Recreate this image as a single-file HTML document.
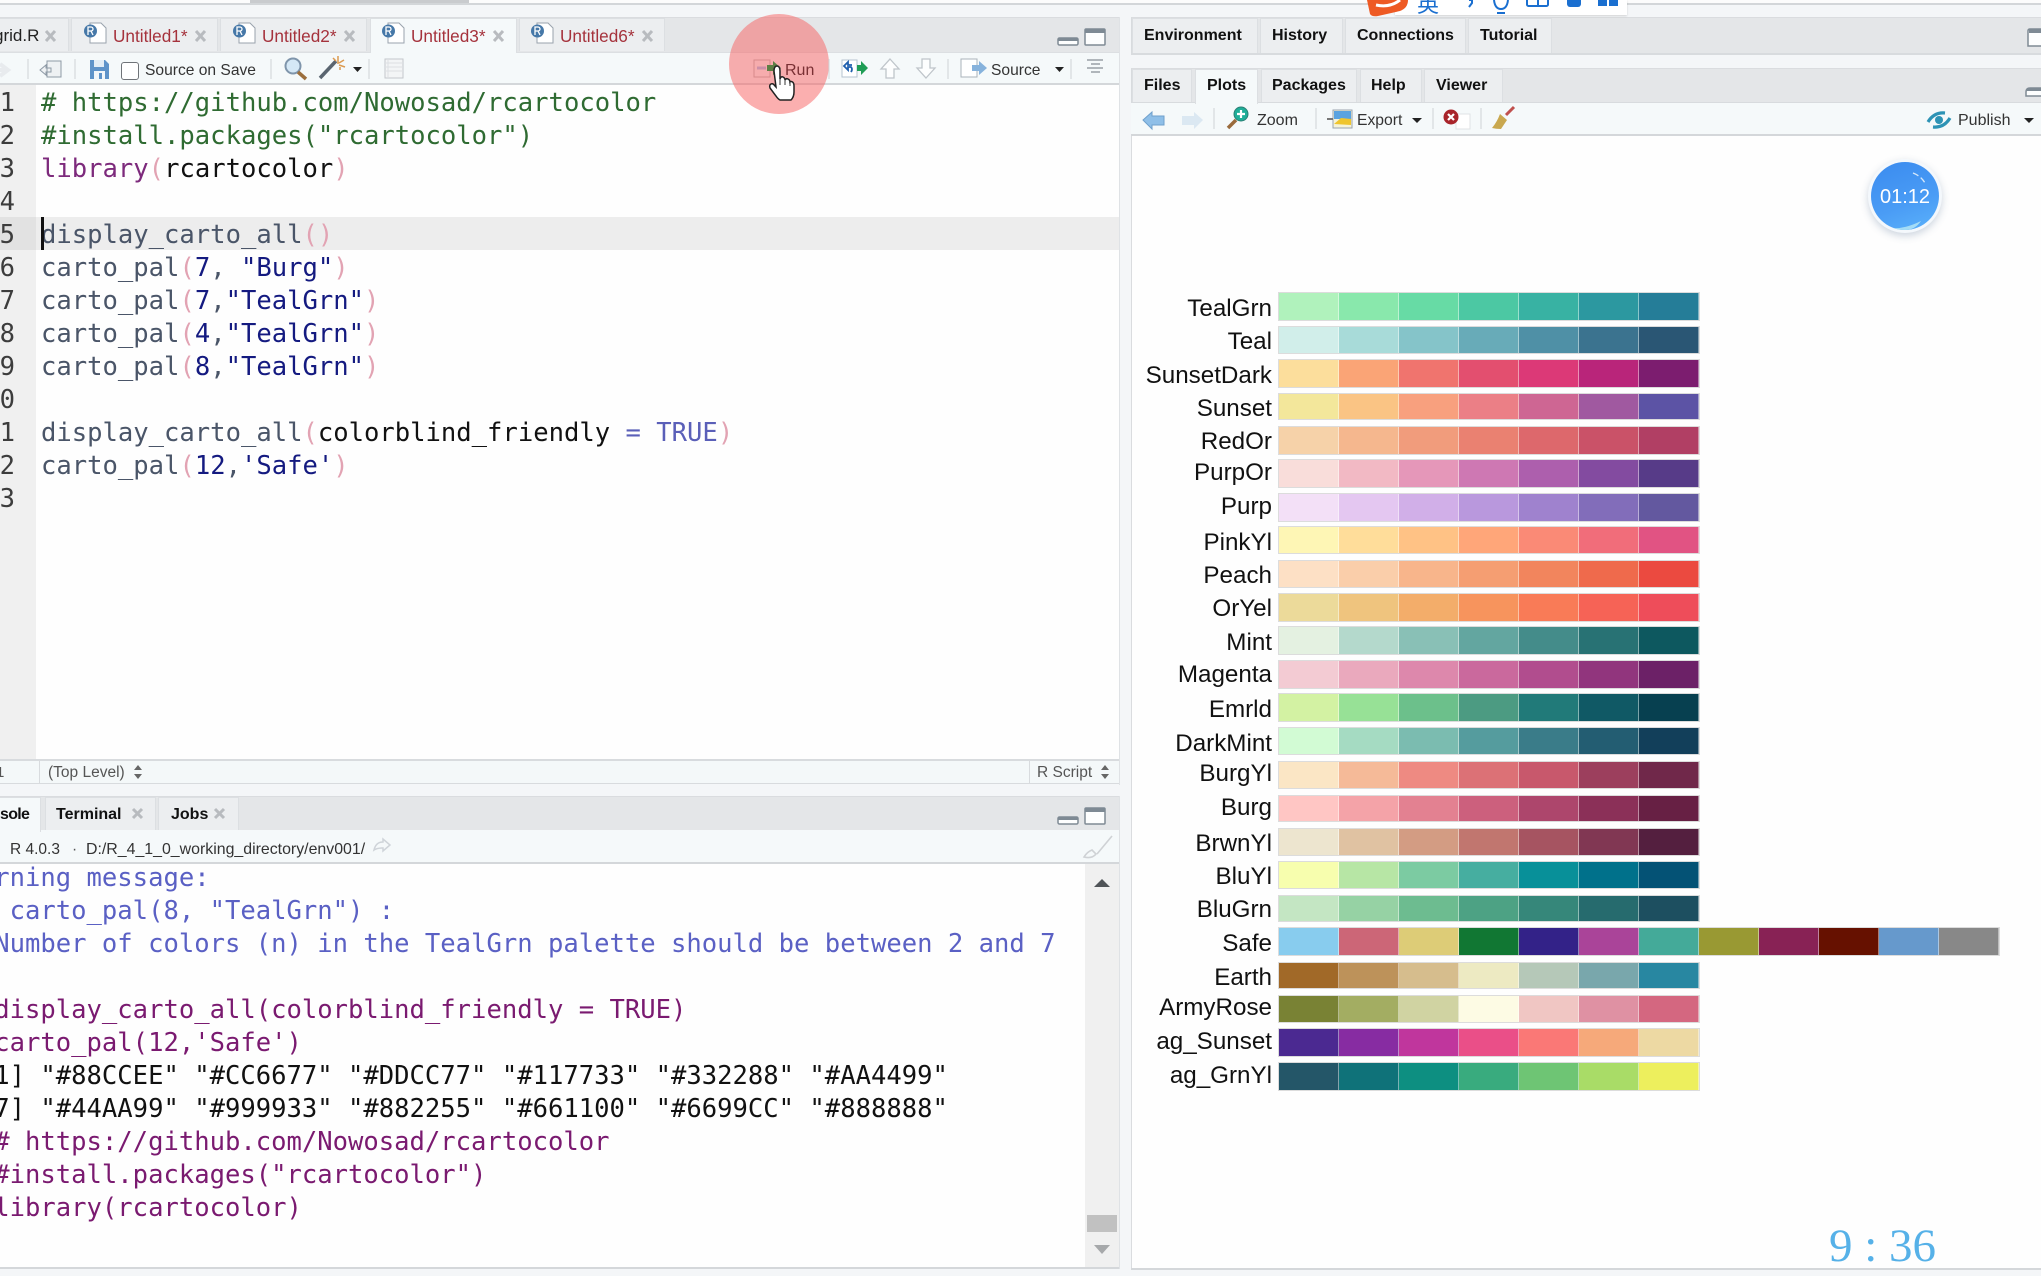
<!DOCTYPE html>
<html><head><meta charset="utf-8"><style>
*{box-sizing:border-box;margin:0;padding:0}
html,body{width:2041px;height:1276px;overflow:hidden;background:#f4f6f8;font-family:"Liberation Sans",sans-serif}
.a{position:absolute}
.t{position:absolute;white-space:pre;font-family:"Liberation Sans",sans-serif;color:#222}
.tab{position:absolute;background:#eceef0;border:1px solid #dcdfe2;border-bottom:none}
.b{font-weight:bold;font-size:16px;color:#111;line-height:20px}
.m{position:absolute;font-family:"DejaVu Sans Mono",monospace;font-size:25.55px;line-height:33px;white-space:pre;left:0}
.n{position:absolute;font-family:"DejaVu Sans Mono",monospace;font-size:25.55px;line-height:33px;color:#3d3d3d;white-space:pre;text-align:right;width:15px;left:0;direction:rtl}
.g{color:#2f6b32}.s{color:#4a5568}.p{color:#e2a3b3}.u{color:#141a80}.k{color:#7d2a7c}.v{color:#111}.o{color:#5a5fb8}
.l{position:absolute;right:769px;font-size:24.2px;line-height:24px;color:#111;white-space:pre;margin-top:1px}
.r{position:absolute;left:1279px;display:flex;height:27px;outline:1px solid #dcdcdc}
.r i{display:block;width:60px;height:100%;border-right:1px solid rgba(255,255,255,.45)}
.cm{color:#5a60c4}.ci{color:#7a1a70}.co{color:#111}
</style></head><body>

<!-- top strip -->
<div class="a" style="left:0;top:0;width:2041px;height:4px;background:#fcfcfc"></div>
<div class="a" style="left:0;top:3px;width:2041px;height:2px;background:#d3d6d9"></div>
<div class="a" style="left:250px;top:0;width:219px;height:3px;background:#c9cbce"></div>

<!-- editor pane -->
<div class="a" style="left:0;top:17px;width:1119px;height:35px;background:#e4e6e8;border-top:1px solid #dadcdf"></div>
<div class="a" style="left:0;top:52px;width:1119px;height:31px;background:#f5f9fa;border-top:1px solid #dcdfe2"></div>
<div class="a" style="left:0;top:83px;width:1119px;height:2px;background:#d4d7da"></div>
<div class="a" style="left:0;top:85px;width:1119px;height:674px;background:#fefefe"></div>
<div class="a" style="left:0;top:85px;width:36px;height:674px;background:#f0f0f0"></div>
<div class="a" style="left:0;top:217px;width:1119px;height:33px;background:#ededed"></div>
<div class="a" style="left:0;top:217px;width:36px;height:33px;background:#e2e2e2"></div>
<div class="a" style="left:1119px;top:17px;width:1px;height:768px;background:#dfe2e5"></div>

<div class="tab" style="left:-10px;top:18px;width:79px;height:33px"></div>
<div class="tab" style="left:71px;top:18px;width:147px;height:33px"></div>
<div class="tab" style="left:220px;top:18px;width:147px;height:33px"></div>
<div class="tab" style="left:370px;top:18px;width:147px;height:35px;background:#f5f9fa"></div>
<div class="tab" style="left:519px;top:18px;width:146px;height:33px"></div>

<div class="t" style="left:-6px;top:25px;font-size:17px;line-height:22px;color:#222">grid.R</div>
<div class="t" style="left:113px;top:25px;font-size:17.2px;line-height:22px;color:#a5323c">Untitled1*</div>
<div class="t" style="left:262px;top:25px;font-size:17.2px;line-height:22px;color:#a5323c">Untitled2*</div>
<div class="t" style="left:411px;top:25px;font-size:17.2px;line-height:22px;color:#a5323c">Untitled3*</div>
<div class="t" style="left:560px;top:25px;font-size:17.2px;line-height:22px;color:#a5323c">Untitled6*</div>
<div class="t" style="left:145px;top:61px;font-size:15.6px;line-height:20px;color:#333">Source on Save</div>
<div class="a" style="left:121px;top:62px;width:18px;height:18px;border:1.5px solid #6f7378;border-radius:3px;background:#fff"></div>
<div class="t" style="left:991px;top:61px;font-size:15.6px;line-height:20px;color:#333">Source</div>

<!-- line numbers -->
<div class="n" style="top:87px">1</div>
<div class="n" style="top:120px">2</div>
<div class="n" style="top:153px">3</div>
<div class="n" style="top:186px">4</div>
<div class="n" style="top:219px">5</div>
<div class="n" style="top:252px">6</div>
<div class="n" style="top:285px">7</div>
<div class="n" style="top:318px">8</div>
<div class="n" style="top:351px">9</div>
<div class="n" style="top:384px">0</div>
<div class="n" style="top:417px">1</div>
<div class="n" style="top:450px">2</div>
<div class="n" style="top:483px">3</div>

<!-- code -->
<div class="m" style="left:41px;top:87px"><span class="g"># https://github.com/Nowosad/rcartocolor</span></div>
<div class="m" style="left:41px;top:120px"><span class="g">#install.packages("rcartocolor")</span></div>
<div class="m" style="left:41px;top:153px"><span class="k">library</span><span class="p">(</span><span class="v">rcartocolor</span><span class="p">)</span></div>
<div class="m" style="left:41px;top:219px"><span class="s">display_carto_all</span><span class="p">()</span></div>
<div class="a" style="left:41px;top:217px;width:3px;height:33px;background:#111"></div>
<div class="m" style="left:41px;top:252px"><span class="s">carto_pal</span><span class="p">(</span><span class="u">7</span><span class="s">, </span><span class="u">"Burg"</span><span class="p">)</span></div>
<div class="m" style="left:41px;top:285px"><span class="s">carto_pal</span><span class="p">(</span><span class="u">7</span><span class="s">,</span><span class="u">"TealGrn"</span><span class="p">)</span></div>
<div class="m" style="left:41px;top:318px"><span class="s">carto_pal</span><span class="p">(</span><span class="u">4</span><span class="s">,</span><span class="u">"TealGrn"</span><span class="p">)</span></div>
<div class="m" style="left:41px;top:351px"><span class="s">carto_pal</span><span class="p">(</span><span class="u">8</span><span class="s">,</span><span class="u">"TealGrn"</span><span class="p">)</span></div>
<div class="m" style="left:41px;top:417px"><span class="s">display_carto_all</span><span class="p">(</span><span class="v">colorblind_friendly</span> <span class="o">=</span> <span class="o">TRUE</span><span class="p">)</span></div>
<div class="m" style="left:41px;top:450px"><span class="s">carto_pal</span><span class="p">(</span><span class="u">12</span><span class="s">,</span><span class="u">'Safe'</span><span class="p">)</span></div>

<!-- status bar -->
<div class="a" style="left:0;top:759px;width:1119px;height:25px;background:#f4f8f9;border-top:2px solid #d8dbde;border-bottom:1px solid #d8dbde"></div>
<div class="a" style="left:39px;top:761px;width:1px;height:22px;background:#d8dbde"></div>
<div class="a" style="left:1029px;top:761px;width:1px;height:22px;background:#d8dbde"></div>
<div class="t" style="left:-4px;top:763px;font-size:15px;line-height:20px;color:#555">1</div>
<div class="t" style="left:48px;top:763px;font-size:15.5px;line-height:20px;color:#555">(Top Level)</div>
<div class="t" style="left:1037px;top:763px;font-size:15.5px;line-height:20px;color:#555">R Script</div>

<!-- console pane -->
<div class="a" style="left:0;top:796px;width:1119px;height:34px;background:#e4e6e8;border-top:1px solid #dadcdf"></div>
<div class="a" style="left:0;top:830px;width:1119px;height:32px;background:#f5f9fa"></div>
<div class="a" style="left:0;top:862px;width:1119px;height:2px;background:#d4d7da"></div>
<div class="a" style="left:0;top:864px;width:1085px;height:403px;background:#fefefe"></div>
<div class="a" style="left:1085px;top:864px;width:34px;height:403px;background:#f0f0f0"></div>
<div class="a" style="left:1087px;top:1215px;width:30px;height:17px;background:#c1c1c1"></div>
<div class="a" style="left:0;top:1267px;width:1119px;height:2px;background:#d4d7da"></div>
<div class="a" style="left:1119px;top:796px;width:1px;height:473px;background:#dfe2e5"></div>
<div class="tab" style="left:-10px;top:797px;width:51px;height:35px;background:#f5f9fa"></div>
<div class="tab" style="left:45px;top:797px;width:111px;height:33px"></div>
<div class="tab" style="left:158px;top:797px;width:81px;height:33px"></div>
<div class="t b" style="left:0;top:805px;letter-spacing:-.7px">sole</div>
<div class="t b" style="left:56px;top:805px">Terminal</div>
<div class="t b" style="left:171px;top:805px">Jobs</div>
<div class="t" style="left:10px;top:840px;font-size:15.5px;line-height:20px;color:#333">R 4.0.3</div>
<div class="t" style="left:72px;top:840px;font-size:15.5px;line-height:20px;color:#555">·</div>
<div class="t" style="left:86px;top:840px;font-size:15.9px;line-height:20px;color:#333">D:/R_4_1_0_working_directory/env001/</div>

<div class="m cm" style="left:-36.5px;top:862px">Warning message:</div>
<div class="m cm" style="left:-36.5px;top:895px">In carto_pal(8, "TealGrn") :</div>
<div class="m cm" style="left:-36.5px;top:928px">  Number of colors (n) in the TealGrn palette should be between 2 and 7</div>
<div class="m ci" style="left:-36.5px;top:994px">> display_carto_all(colorblind_friendly = TRUE)</div>
<div class="m ci" style="left:-36.5px;top:1027px">> carto_pal(12,'Safe')</div>
<div class="m co" style="left:-36.5px;top:1060px"> [1] "#88CCEE" "#CC6677" "#DDCC77" "#117733" "#332288" "#AA4499"</div>
<div class="m co" style="left:-36.5px;top:1093px"> [7] "#44AA99" "#999933" "#882255" "#661100" "#6699CC" "#888888"</div>
<div class="m ci" style="left:-36.5px;top:1126px">> # https://github.com/Nowosad/rcartocolor</div>
<div class="m ci" style="left:-36.5px;top:1159px">> #install.packages("rcartocolor")</div>
<div class="m ci" style="left:-36.5px;top:1192px">> library(rcartocolor)</div>

<!-- right top pane -->
<div class="a" style="left:1131px;top:17px;width:910px;height:38px;background:#e4e6e8;border-top:1px solid #dadcdf;border-bottom:2px solid #d8dbde;border-left:1px solid #d8dbde"></div>
<div class="tab" style="left:1132px;top:18px;width:126px;height:35px"></div>
<div class="tab" style="left:1260px;top:18px;width:83px;height:35px"></div>
<div class="tab" style="left:1345px;top:18px;width:121px;height:35px"></div>
<div class="tab" style="left:1468px;top:18px;width:84px;height:35px"></div>
<div class="t b" style="left:1144px;top:26px">Environment</div>
<div class="t b" style="left:1272px;top:26px">History</div>
<div class="t b" style="left:1357px;top:26px">Connections</div>
<div class="t b" style="left:1480px;top:26px">Tutorial</div>

<!-- right bottom pane -->
<div class="a" style="left:1131px;top:68px;width:910px;height:34px;background:#e4e6e8;border-top:1px solid #dadcdf;border-left:1px solid #d8dbde"></div>
<div class="a" style="left:1131px;top:102px;width:910px;height:32px;background:#f5f9fa;border-top:1px solid #d8dbde"></div>
<div class="a" style="left:1131px;top:134px;width:910px;height:2px;background:#d4d7da"></div>
<div class="a" style="left:1131px;top:136px;width:910px;height:1132px;background:#fefefe;border-left:1px solid #dadcdf"></div>
<div class="a" style="left:1131px;top:1268px;width:910px;height:2px;background:#d4d7da"></div>
<div class="tab" style="left:1132px;top:69px;width:60px;height:33px"></div>
<div class="tab" style="left:1195px;top:69px;width:63px;height:35px;background:#f5f9fa"></div>
<div class="tab" style="left:1261px;top:69px;width:96px;height:33px"></div>
<div class="tab" style="left:1360px;top:69px;width:62px;height:33px"></div>
<div class="tab" style="left:1424px;top:69px;width:79px;height:33px"></div>
<div class="t b" style="left:1144px;top:76px">Files</div>
<div class="t b" style="left:1207px;top:76px">Plots</div>
<div class="t b" style="left:1272px;top:76px">Packages</div>
<div class="t b" style="left:1371px;top:76px">Help</div>
<div class="t b" style="left:1436px;top:76px">Viewer</div>
<div class="t" style="left:1257px;top:111px;font-size:16px;line-height:20px;color:#333">Zoom</div>
<div class="t" style="left:1357px;top:111px;font-size:15.7px;line-height:20px;color:#333">Export</div>
<div class="t" style="left:1958px;top:111px;font-size:16px;line-height:20px;color:#333">Publish</div>

<!-- palette labels -->
<div class="l" style="top:296px">TealGrn</div>
<div class="l" style="top:329px">Teal</div>
<div class="l" style="top:363px">SunsetDark</div>
<div class="l" style="top:396px">Sunset</div>
<div class="l" style="top:429px">RedOr</div>
<div class="l" style="top:460px">PurpOr</div>
<div class="l" style="top:494px">Purp</div>
<div class="l" style="top:530px">PinkYl</div>
<div class="l" style="top:563px">Peach</div>
<div class="l" style="top:596px">OrYel</div>
<div class="l" style="top:630px">Mint</div>
<div class="l" style="top:662px">Magenta</div>
<div class="l" style="top:697px">Emrld</div>
<div class="l" style="top:731px">DarkMint</div>
<div class="l" style="top:761px">BurgYl</div>
<div class="l" style="top:795px">Burg</div>
<div class="l" style="top:831px">BrwnYl</div>
<div class="l" style="top:864px">BluYl</div>
<div class="l" style="top:897px">BluGrn</div>
<div class="l" style="top:931px">Safe</div>
<div class="l" style="top:965px">Earth</div>
<div class="l" style="top:995px">ArmyRose</div>
<div class="l" style="top:1029px">ag_Sunset</div>
<div class="l" style="top:1063px">ag_GrnYl</div>

<!-- palette swatches -->
<div class="r" style="top:293px"><i style="background:#B0F2BC"></i><i style="background:#89E8AC"></i><i style="background:#67DBA5"></i><i style="background:#4CC8A3"></i><i style="background:#38B2A3"></i><i style="background:#2C98A0"></i><i style="background:#257D98"></i></div>
<div class="r" style="top:327px;height:26px"><i style="background:#D1EEEA"></i><i style="background:#A8DBD9"></i><i style="background:#85C4C9"></i><i style="background:#68ABB8"></i><i style="background:#4F90A6"></i><i style="background:#3B738F"></i><i style="background:#2A5674"></i></div>
<div class="r" style="top:360px"><i style="background:#FCDE9C"></i><i style="background:#FAA476"></i><i style="background:#F0746E"></i><i style="background:#E34F6F"></i><i style="background:#DC3977"></i><i style="background:#B9257A"></i><i style="background:#7C1D6F"></i></div>
<div class="r" style="top:394px;height:25px"><i style="background:#F3E79B"></i><i style="background:#FAC484"></i><i style="background:#F8A07E"></i><i style="background:#EB7F86"></i><i style="background:#CE6693"></i><i style="background:#A059A0"></i><i style="background:#5C53A5"></i></div>
<div class="r" style="top:427px"><i style="background:#F6D2A9"></i><i style="background:#F5B78E"></i><i style="background:#F19C7C"></i><i style="background:#EA8171"></i><i style="background:#DD686C"></i><i style="background:#CA5268"></i><i style="background:#B13F64"></i></div>
<div class="r" style="top:460px"><i style="background:#F9DDDA"></i><i style="background:#F2B9C4"></i><i style="background:#E597B9"></i><i style="background:#CE78B3"></i><i style="background:#AD5FAD"></i><i style="background:#834BA0"></i><i style="background:#573B88"></i></div>
<div class="r" style="top:494px"><i style="background:#F3E0F7"></i><i style="background:#E4C7F1"></i><i style="background:#D1AFE8"></i><i style="background:#B998DD"></i><i style="background:#9F82CE"></i><i style="background:#826DBA"></i><i style="background:#63589F"></i></div>
<div class="r" style="top:527px;height:26px"><i style="background:#FEF6B5"></i><i style="background:#FFDD9A"></i><i style="background:#FFC285"></i><i style="background:#FFA679"></i><i style="background:#FA8A76"></i><i style="background:#F16D7A"></i><i style="background:#E15383"></i></div>
<div class="r" style="top:561px;height:26px"><i style="background:#FDE0C5"></i><i style="background:#FACEAA"></i><i style="background:#F8B58B"></i><i style="background:#F59E72"></i><i style="background:#F2855D"></i><i style="background:#EF6A4C"></i><i style="background:#EB4A40"></i></div>
<div class="r" style="top:594px"><i style="background:#ECDA9A"></i><i style="background:#EFC47E"></i><i style="background:#F3AD6A"></i><i style="background:#F7945D"></i><i style="background:#F97B57"></i><i style="background:#F66356"></i><i style="background:#EE4D5A"></i></div>
<div class="r" style="top:627px"><i style="background:#E4F1E1"></i><i style="background:#B4D9CC"></i><i style="background:#89C0B6"></i><i style="background:#63A6A0"></i><i style="background:#448C8A"></i><i style="background:#287274"></i><i style="background:#0D585F"></i></div>
<div class="r" style="top:661px"><i style="background:#F3CBD3"></i><i style="background:#EAA9BD"></i><i style="background:#DD88AC"></i><i style="background:#CA699D"></i><i style="background:#B14D8E"></i><i style="background:#91357D"></i><i style="background:#6C2167"></i></div>
<div class="r" style="top:694px"><i style="background:#D3F2A3"></i><i style="background:#97E196"></i><i style="background:#6CC08B"></i><i style="background:#4C9B82"></i><i style="background:#217A79"></i><i style="background:#105965"></i><i style="background:#074050"></i></div>
<div class="r" style="top:728px;height:26px"><i style="background:#D2FBD4"></i><i style="background:#A5DBC2"></i><i style="background:#7BBCB0"></i><i style="background:#559C9E"></i><i style="background:#3A7C89"></i><i style="background:#235D72"></i><i style="background:#123F5A"></i></div>
<div class="r" style="top:762px;height:26px"><i style="background:#FBE6C5"></i><i style="background:#F5BA98"></i><i style="background:#EE8A82"></i><i style="background:#DC7176"></i><i style="background:#C8586C"></i><i style="background:#9C3F5D"></i><i style="background:#70284A"></i></div>
<div class="r" style="top:796px;height:25px"><i style="background:#FFC6C4"></i><i style="background:#F4A3A8"></i><i style="background:#E38191"></i><i style="background:#CC607D"></i><i style="background:#AD466C"></i><i style="background:#8B3058"></i><i style="background:#672044"></i></div>
<div class="r" style="top:829px;height:26px"><i style="background:#EDE5CF"></i><i style="background:#E0C2A2"></i><i style="background:#D39C83"></i><i style="background:#C1766F"></i><i style="background:#A65461"></i><i style="background:#813753"></i><i style="background:#541F3F"></i></div>
<div class="r" style="top:862px;height:26px"><i style="background:#F7FEAE"></i><i style="background:#B7E6A5"></i><i style="background:#7CCBA2"></i><i style="background:#46AEA0"></i><i style="background:#089099"></i><i style="background:#00718B"></i><i style="background:#045275"></i></div>
<div class="r" style="top:896px;height:25px"><i style="background:#C4E6C3"></i><i style="background:#96D2A4"></i><i style="background:#6DBC90"></i><i style="background:#4DA284"></i><i style="background:#36877A"></i><i style="background:#266B6E"></i><i style="background:#1D4F60"></i></div>
<div class="r" style="top:928px"><i style="background:#88CCEE"></i><i style="background:#CC6677"></i><i style="background:#DDCC77"></i><i style="background:#117733"></i><i style="background:#332288"></i><i style="background:#AA4499"></i><i style="background:#44AA99"></i><i style="background:#999933"></i><i style="background:#882255"></i><i style="background:#661100"></i><i style="background:#6699CC"></i><i style="background:#888888"></i></div>
<div class="r" style="top:963px;height:25px"><i style="background:#A16928"></i><i style="background:#BD925A"></i><i style="background:#D6BD8D"></i><i style="background:#EDEAC2"></i><i style="background:#B5C8B8"></i><i style="background:#79A7AC"></i><i style="background:#2887A1"></i></div>
<div class="r" style="top:996px;height:26px"><i style="background:#798234"></i><i style="background:#A3AD62"></i><i style="background:#D0D3A2"></i><i style="background:#FDFBE4"></i><i style="background:#F0C6C3"></i><i style="background:#DF91A3"></i><i style="background:#D46780"></i></div>
<div class="r" style="top:1029px"><i style="background:#4B2991"></i><i style="background:#872CA2"></i><i style="background:#C0369D"></i><i style="background:#EA4F88"></i><i style="background:#FA7876"></i><i style="background:#F6A97A"></i><i style="background:#EDD9A3"></i></div>
<div class="r" style="top:1063px"><i style="background:#245668"></i><i style="background:#0F7279"></i><i style="background:#0D8F81"></i><i style="background:#39AB7E"></i><i style="background:#6EC574"></i><i style="background:#A9DC67"></i><i style="background:#EDEF5D"></i></div>

<!-- IME bar -->
<div class="a" style="left:1395px;top:0;width:232px;height:15px;background:#fff;box-shadow:0 1px 2px rgba(0,0,0,.15)"></div>

<!-- timer -->
<div class="a" style="left:1868px;top:159px;width:74px;height:74px;border-radius:50%;background:#f4f8fc;box-shadow:0 3px 8px rgba(60,90,130,.25)"></div>
<div class="a" style="left:1871px;top:162px;width:68px;height:68px;border-radius:50%;background:linear-gradient(160deg,#3a8bef 0%,#4a9cf5 60%,#5bb2fb 100%)"></div>
<div class="t" style="left:1871px;top:185px;width:68px;text-align:center;color:#fff;font-size:20px;line-height:24px">01:12</div>
<div class="t" style="left:1829px;top:1217px;font-family:'Liberation Serif',serif;font-size:47px;line-height:58px;color:#56b1e8">9 : 36</div>

<!-- icons -->
<svg class="a" style="left:0;top:0" width="2041" height="1276" viewBox="0 0 2041 1276" fill="none">
<!-- tab close x -->
<g stroke="#b8bbbf" stroke-width="3">
<path d="M46 41l9-10m0 10l-9-10M196 41l9-10m0 10l-9-10M345 41l9-10m0 10l-9-10M494 41l9-10m0 10l-9-10M643 41l9-10m0 10l-9-10"/>
<path d="M133 818l9-9m0 9l-9-9M215 818l9-9m0 9l-9-9"/>
</g>
<!-- R doc icons -->
<path d="M90 23h11l5 5v15H90z" fill="#fff" stroke="#9aa3ad"/><circle cx="90.5" cy="31" r="6.5" fill="#4678a8"/><path d="M88 35v-8h3a2 2 0 010 4h-3m3 0l2 4" stroke="#fff" stroke-width="1.3"/>
<path d="M239 23h11l5 5v15h-16z" fill="#fff" stroke="#9aa3ad"/><circle cx="239.5" cy="31" r="6.5" fill="#4678a8"/><path d="M237 35v-8h3a2 2 0 010 4h-3m3 0l2 4" stroke="#fff" stroke-width="1.3"/>
<path d="M388 23h11l5 5v15h-16z" fill="#fff" stroke="#9aa3ad"/><circle cx="388.5" cy="31" r="6.5" fill="#4678a8"/><path d="M386 35v-8h3a2 2 0 010 4h-3m3 0l2 4" stroke="#fff" stroke-width="1.3"/>
<path d="M537 23h11l5 5v15h-16z" fill="#fff" stroke="#9aa3ad"/><circle cx="537.5" cy="31" r="6.5" fill="#4678a8"/><path d="M535 35v-8h3a2 2 0 010 4h-3m3 0l2 4" stroke="#fff" stroke-width="1.3"/>
<!-- editor toolbar -->
<path d="M0 64l8 6-8 6M8 70H0" stroke="#e8ebee" stroke-width="4"/>
<path d="M28 59v20M75 59v20M271 59v20M369 59v20M948 59v20M1071 59v20" stroke="#cfd3d6"/>
<path d="M47 61h14v16H47zM40 70l6-5v3h5v4h-5v3z" fill="#eef1f3" stroke="#8e9aa6"/>
<path d="M90 60h15l4 4v15H90z" fill="#5f93c9"/><rect x="94" y="60" width="10" height="7" fill="#e3edf6"/><rect x="94" y="71" width="11" height="8" fill="#f2f6fa"/><rect x="99" y="73" width="3" height="6" fill="#5f93c9"/>
<circle cx="293" cy="66" r="7.5" fill="#d5e8f6" stroke="#7f95ab" stroke-width="2"/><path d="M298 72l8 7" stroke="#9c6f3d" stroke-width="3.5"/>
<path d="M320 78l16-17" stroke="#5a6570" stroke-width="3.5"/><path d="M338 56v8M344 60l-5 3M333 58l3 3M345 67l-6-2M340 70v-3" stroke="#dc9a50" stroke-width="1.5"/>
<path d="M353 67h9l-4.500 5z" fill="#222"/>
<path d="M385 59h18v19h-18z" fill="#f3f5f6" stroke="#c4c8cc"/><path d="M388 59v19M385 63h18M385 67h18M385 71h18" stroke="#dde0e3"/>
<!-- run group neighbours -->
<path d="M842 60h15v17h-15z" fill="#fff" stroke="#b6c4d0"/><path d="M852 65h-4v-3l-4 4 4 4v-3h3q2 2 0 5" stroke="#1f5fae" stroke-width="1.8"/><path d="M857 65h4v-4l7 7-7 7v-4h-4z" fill="#1f9d55"/>
<path d="M890 59l9 10h-5v9h-8v-9h-5z" fill="#fdfefe" stroke="#bfc5ca" stroke-width="1.3"/>
<path d="M926 78l9-10h-5v-9h-8v9h-5z" fill="#fdfefe" stroke="#bfc5ca" stroke-width="1.3"/>
<path d="M961 59h16v18h-16z" fill="#fff" stroke="#aab3bb"/><path d="M972 65h7v-4l8 7-8 7v-4h-7z" fill="#86b2dc"/>
<path d="M1055 67h9l-4.500 5z" fill="#222"/>
<path d="M1087 60h16M1091 64h9M1087 68h16M1091 72h9" stroke="#9aa0a6" stroke-width="1.4"/>
<!-- window icons -->
<g fill="#fdfefe" stroke="#7e8a94" stroke-width="1.5">
<rect x="1058" y="38" width="20" height="7" rx="1.5"/><rect x="1085" y="29" width="20" height="16" rx="1"/>
<rect x="1058" y="817" width="20" height="7" rx="1.5"/><rect x="1085" y="808" width="20" height="16" rx="1"/>
<path d="M2042 29h-12q-2 0-2 2v15h14" /><path d="M2042 88h-12q-4 0-4 4v4h16"/>
</g>
<path d="M1058 38h20v3h-20zM1085 29h20v4h-20zM1058 817h20v3h-20zM1085 808h20v4h-20zM2029 29h12v4h-12zM2027 88h14v3h-14z" fill="#7e8a94"/>
<!-- steppers -->
<path d="M134 770l4-5 4 5zM134 774l4 5 4-5zM1101 770l4-5 4 5zM1101 774l4 5 4-5z" fill="#666"/>
<!-- console bits -->
<path d="M374 850q2-8 9-8v-3l7 6-7 6v-3q-6 0-9 2z" stroke="#cfd4d9" stroke-width="1.5" fill="#f5f9fa"/>
<path d="M1112 836l-15 18M1084 857q8 2 12-3l-4-4q-5 2-8 7z" stroke="#cfd2d5" stroke-width="1.6"/>
<path d="M1094 887l8-8 8 8z" fill="#505458"/><path d="M1094 1245l8 9 8-9z" fill="#a6a8aa"/>
<!-- plots toolbar -->
<path d="M1143 120l9-8v4h12v9h-12v4z" fill="#8fbfe8" stroke="#6fa0cc"/>
<path d="M1203 120l-9-8v4h-12v9h12v4z" fill="#dbe8f2"/>
<path d="M1214 108v21M1316 108v21M1433 108v21M1481 108v21" stroke="#cfd3d6"/>
<circle cx="1241" cy="114" r="7" fill="#1fae98" stroke="#2a7f74"/><path d="M1241 110v8M1237 114h8" stroke="#fff" stroke-width="2.200"/><path d="M1236 120l-8 8" stroke="#9a6b3c" stroke-width="3.500"/>
<rect x="1333" y="110" width="19" height="18" fill="#f6f3d8" stroke="#9aa4ae"/><path d="M1334 111h17v8h-17z" fill="#5aa3e0"/><path d="M1334 124l7-6 10 1v6z" fill="#efc52d"/><path d="M1327 119h6" stroke="#777" stroke-width="2"/>
<path d="M1412 118h10l-5 5z" fill="#222"/>
<rect x="1456" y="114" width="14" height="15" fill="#fff" stroke="#e0e3e6"/>
<circle cx="1451" cy="117" r="7.500" fill="#a8242a"/><path d="M1448 114l6 6m0-6l-6 6" stroke="#fff" stroke-width="2.200"/>
<path d="M1506 115l8-8" stroke="#c0504d" stroke-width="3"/><path d="M1500 114l7 6-6 9q-5 0-9-1 5-6 8-14z" fill="#c9a84f"/>
<path d="M1928 122q6-10 17-9" stroke="#2d93b5" stroke-width="3.200"/><path d="M1950 118q-6 10-17 9" stroke="#2d93b5" stroke-width="3.200"/><circle cx="1939" cy="120" r="4" fill="#2d93b5"/>
<path d="M2024 118h10l-5 5z" fill="#222"/>
<!-- IME -->
<path d="M1367 0l3 14q2 3 8 2l22-5q8-3 8-11z" fill="#ee5a24"/><path d="M1376 5q14 3 24-5" stroke="#fff" stroke-width="3"/>
<text x="1417" y="12" font-family="'Noto Sans CJK SC',sans-serif" font-size="22" fill="#1a6fd0">英</text>
<path d="M1469 0h3v3l-3 4" stroke="#1a6fd0" stroke-width="2"/>
<path d="M1494 0q1 9 7 9t7-9M1497 13h8" stroke="#1a6fd0" stroke-width="2"/>
<rect x="1527" y="-6" width="21" height="12" rx="1.500" stroke="#1a6fd0" stroke-width="2"/><path d="M1538 0v6" stroke="#1a6fd0" stroke-width="2"/>
<rect x="1567" y="-8" width="14" height="15" rx="3" fill="#1a6fd0"/>
<rect x="1598" y="-6" width="9" height="12" fill="#1a6fd0"/><rect x="1609" y="-6" width="9" height="12" fill="#1a6fd0"/>
<!-- timer arc -->
<path d="M1913 173q8 3 12 10" stroke="#d6e8fa" stroke-width="1.300" stroke-dasharray="6 3"/>
<path d="M1893 228q12 1 28-7q-6 9-16 9q-7 0-12-2z" fill="#a4dcf6"/>
<!-- red circle -->
<circle cx="779" cy="64" r="50" fill="#f85f5f" fill-opacity=".5"/>
<path d="M829 59v20" stroke="#cfd3d6"/>
<!-- run icon over circle -->
<path d="M754 60h16v17h-16z" stroke="#d88a8a"/><path d="M757 68h9" stroke="#cc8fa8" stroke-width="3"/><path d="M767 65h6v-4l8 7-8 7v-4h-6z" fill="#5d7f45"/>
</svg>
<div class="t" style="left:785px;top:61px;font-size:16px;line-height:20px;color:#7a3034">Run</div>
<svg class="a" style="left:0;top:0" width="2041" height="1276" viewBox="0 0 2041 1276" fill="none">
<!-- hand cursor -->
<path d="M774 71q0-5 3-5t3 5v8q1-3 3-2t2 3q1-2 3-1t2 3q1-1 2.500 0t1.500 4v6q0 5-3 8h-11q-2-1-4-4l-6-8q-1-3 1-4t4 2l1 1z" fill="#fff" stroke="#222" stroke-width="1.500"/>
<path d="M780 79v6M785 80v5M790 83v3" stroke="#333"/>
</svg>
</body></html>
